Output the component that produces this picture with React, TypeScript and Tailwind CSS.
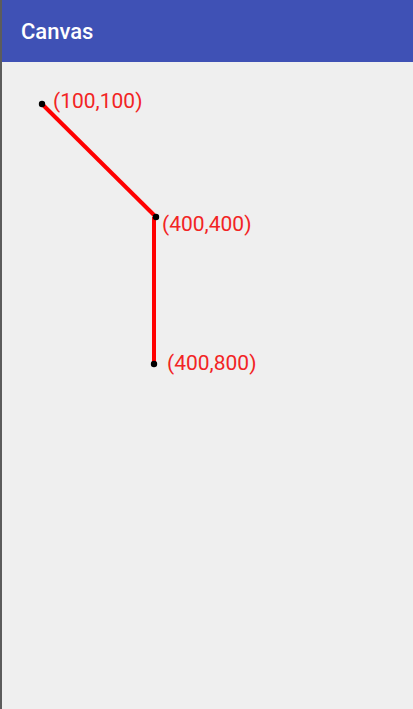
import React from 'react';

// points in page pixels (canvas coordinates scaled ~0.377)
const points = [
  { x: 42, y: 104, label: '(100,100)', lx: 53, ly: 108 },
  { x: 156, y: 217, label: '(400,400)', lx: 162, ly: 231 },
  { x: 154, y: 364, label: '(400,800)', lx: 167, ly: 370 },
];

const App = () => {
  return (
    <div className="min-h-screen w-full bg-[#efefef] border-l-2 border-[#5c5c5c] flex flex-col" style={{ height: 709 }}>
      {/* Toolbar */}
      <div className="h-[62px] bg-[#3f51b5] flex items-center px-[19px] shrink-0">
        <span className="text-white text-[22px] font-medium font-['Roboto',sans-serif] leading-none mt-[1px]">Canvas</span>
      </div>

      {/* Canvas area */}
      <div className="flex-1">
        <svg width="411" height="647" viewBox="2 62 411 647" className="block">
          <line x1={42} y1={104} x2={156} y2={217} stroke="#ff0000" strokeWidth={4} />
          <line x1={154} y1={217} x2={154} y2={364} stroke="#ff0000" strokeWidth={4} />
          {points.map((p) => (
            <g key={p.label}>
              <circle cx={p.x} cy={p.y} r={3.2} fill="#000" />
              <text
                x={p.lx}
                y={p.ly}
                fill="#f22424"
                fontSize={21}
                fontFamily="Roboto, sans-serif"
              >
                {p.label}
              </text>
            </g>
          ))}
        </svg>
      </div>
    </div>
  );
};

export default App;
